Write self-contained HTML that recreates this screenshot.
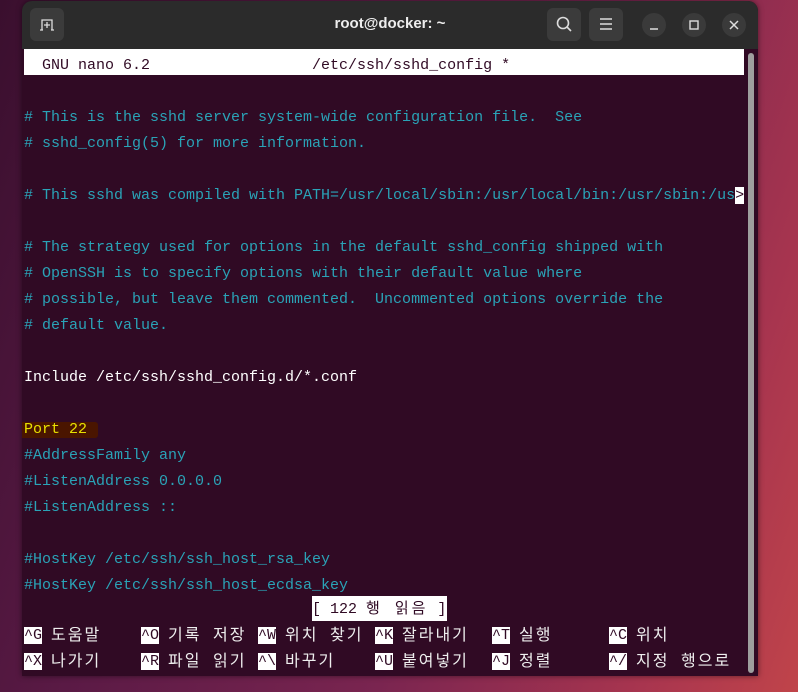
<!DOCTYPE html>
<html><head><meta charset="utf-8"><style>
*{margin:0;padding:0;box-sizing:border-box}
body{width:798px;height:692px;overflow:hidden;position:relative;
background:linear-gradient(110deg,#3a0f2e 0%,#5a1a45 30%,#7a2550 60%,#a8354f 85%,#c0444a 100%);}
.win{position:absolute;left:22px;top:1px;width:736px;height:675px;background:#300a24;border-radius:10px 10px 0 0;overflow:hidden;box-shadow:0 0 6px rgba(0,0,0,.5)}
.hb{position:absolute;left:0;top:0;width:736px;height:48px;background:#2b2b2b}
.title{position:absolute;left:0;width:736px;top:14px;text-align:center;color:#eee;font:bold 15px "Liberation Sans",sans-serif}
.btn{position:absolute;top:7px;width:34px;height:33px;background:#3b3b3b;border-radius:6px}
.cb{position:absolute;top:12px;width:24px;height:24px;border-radius:50%;background:#3a3a3a}
.t{position:absolute;left:2px;margin-top:4px;font:15px/26px "Liberation Mono","Noto Sans CJK KR",monospace;color:#2aa3b7;white-space:pre}
.w{color:#fff}
.k{background:#fff;color:#300a24}
.h{letter-spacing:2px;font-size:16px;color:#eee}
.sb{position:absolute;left:726px;top:52px;width:6px;height:620px;background:#9e9e9e;border-radius:3px}
</style></head><body>
<div class="win">
<div class="hb">
<div class="btn" style="left:8px"><svg width="34" height="33"><path d="M12 22V12h10v10" fill="none" stroke="#ddd" stroke-width="1.3"/><path d="M17 14v6M14 17h6" stroke="#ddd" stroke-width="1.3"/><path d="M10 22h3M21 22h3" stroke="#ddd" stroke-width="1.3"/></svg></div>
<div class="title">root@docker: ~</div>
<div class="btn" style="left:525px"><svg width="34" height="33"><circle cx="16" cy="15" r="5.5" fill="none" stroke="#ddd" stroke-width="1.6"/><path d="M20 19l4 4" stroke="#ddd" stroke-width="1.6"/></svg></div>
<div class="btn" style="left:567px"><svg width="34" height="33"><path d="M11 11h12M11 16h12M11 21h12" stroke="#ddd" stroke-width="1.4"/></svg></div>
<div class="cb" style="left:620px"><svg width="24" height="24"><path d="M8 16h8" stroke="#ddd" stroke-width="1.5"/></svg></div>
<div class="cb" style="left:660px"><svg width="24" height="24"><rect x="8" y="8" width="8" height="8" fill="none" stroke="#ddd" stroke-width="1.4"/></svg></div>
<div class="cb" style="left:700px"><svg width="24" height="24"><path d="M8 8l8 8M16 8l-8 8" stroke="#ddd" stroke-width="1.5"/></svg></div>
</div>
<div style="position:absolute;left:2px;top:48px;width:720px;height:26px;background:#fff"></div>
<div class="t" style="top:48px;color:#300a24">  GNU nano 6.2                  /etc/ssh/sshd_config *</div>
<div class="t" style="top:100px"># This is the sshd server system-wide configuration file.  See</div>
<div class="t" style="top:126px"># sshd_config(5) for more information.</div>
<div class="t" style="top:178px"># This sshd was compiled with PATH=/usr/local/sbin:/usr/local/bin:/usr/sbin:/us<span class="k">&gt;</span></div>
<div class="t" style="top:230px"># The strategy used for options in the default sshd_config shipped with</div>
<div class="t" style="top:256px"># OpenSSH is to specify options with their default value where</div>
<div class="t" style="top:282px"># possible, but leave them commented.  Uncommented options override the</div>
<div class="t" style="top:308px"># default value.</div>
<div class="t w" style="top:360px">Include /etc/ssh/sshd_config.d/*.conf</div>
<div style="position:absolute;left:-12px;top:421px;width:88px;height:16px;background:#4a1500;border-radius:3px"></div>
<div class="t" style="top:412px;color:#e8e000">Port 22</div>
<div class="t" style="top:438px">#AddressFamily any</div>
<div class="t" style="top:464px">#ListenAddress 0.0.0.0</div>
<div class="t" style="top:490px">#ListenAddress ::</div>
<div class="t" style="top:542px">#HostKey /etc/ssh/ssh_host_rsa_key</div>
<div class="t" style="top:568px">#HostKey /etc/ssh/ssh_host_ecdsa_key</div>
<div style="position:absolute;left:290px;top:595px;width:135px;height:25px;background:#fff"></div>
<div class="t" style="top:592px;left:290px;color:#300a24">[ 122 <span style="letter-spacing:3px">행 읽음</span> ]</div>
<div style="position:absolute;top:618px;left:0;width:720px;height:52px">
<div class="t" style="top:0"><span class="k">^G</span></div><div class="t h" style="top:0;left:29px">도움말</div>
<div class="t" style="top:0;left:119px"><span class="k">^O</span></div><div class="t h" style="top:0;left:146px">기록 저장</div>
<div class="t" style="top:0;left:236px"><span class="k">^W</span></div><div class="t h" style="top:0;left:263px">위치 찾기</div>
<div class="t" style="top:0;left:353px"><span class="k">^K</span></div><div class="t h" style="top:0;left:380px">잘라내기</div>
<div class="t" style="top:0;left:470px"><span class="k">^T</span></div><div class="t h" style="top:0;left:497px">실행</div>
<div class="t" style="top:0;left:587px"><span class="k">^C</span></div><div class="t h" style="top:0;left:614px">위치</div>
<div class="t" style="top:26px"><span class="k">^X</span></div><div class="t h" style="top:26px;left:29px">나가기</div>
<div class="t" style="top:26px;left:119px"><span class="k">^R</span></div><div class="t h" style="top:26px;left:146px">파일 읽기</div>
<div class="t" style="top:26px;left:236px"><span class="k">^\</span></div><div class="t h" style="top:26px;left:263px">바꾸기</div>
<div class="t" style="top:26px;left:353px"><span class="k">^U</span></div><div class="t h" style="top:26px;left:380px">붙여넣기</div>
<div class="t" style="top:26px;left:470px"><span class="k">^J</span></div><div class="t h" style="top:26px;left:497px">정렬</div>
<div class="t" style="top:26px;left:587px"><span class="k">^/</span></div><div class="t h" style="top:26px;left:614px">지정 행으로</div>
</div>
<div class="sb"></div>
</div>
</body></html>
